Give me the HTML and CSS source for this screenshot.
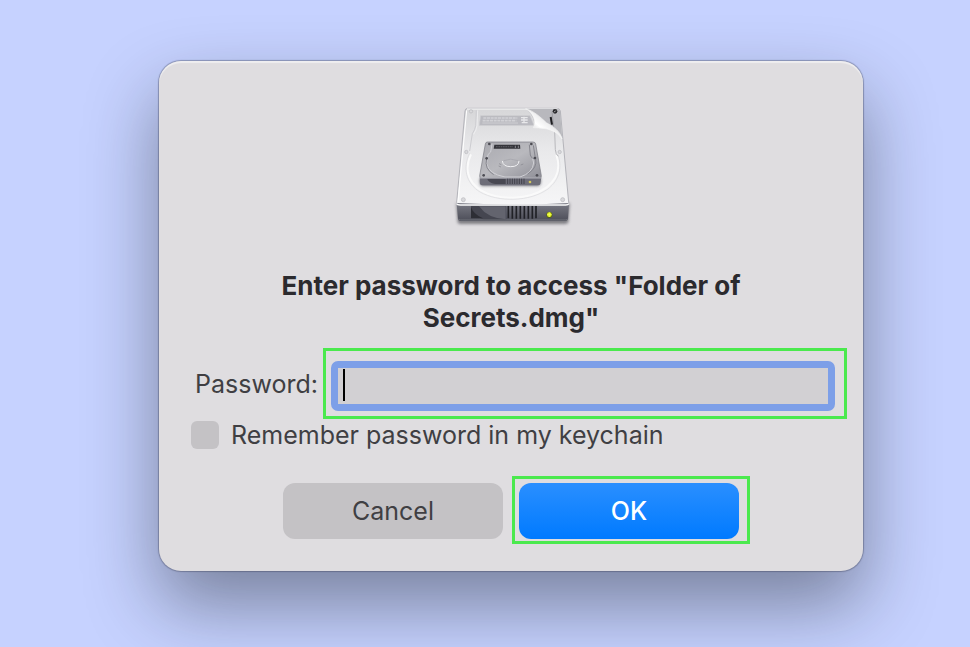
FILE: index.html
```html
<!DOCTYPE html>
<html lang="en">

<head>
    <meta charset="UTF-8">
    <meta name="viewport" content="width=device-width, initial-scale=1.0">
    <title>Enter password</title>
    <link rel="stylesheet" href="styles.css">
</head>

<body>
    <form class="dialog">
        <svg class="disk-icon" viewBox="-4 0 435 420" aria-hidden="true">
            <defs>
                <linearGradient id="top" x1="0" y1="0" x2="0" y2="1">
                    <stop offset="0" stop-color="#d6d6d8" />
                    <stop offset="0.4" stop-color="#e8e8ea" />
                    <stop offset="1" stop-color="#f6f6f7" />
                </linearGradient>
                <linearGradient id="front" x1="0" y1="0" x2="0" y2="1">
                    <stop offset="0" stop-color="#797a84" />
                    <stop offset="1" stop-color="#4c4d58" />
                </linearGradient>
                <linearGradient id="small" x1="0" y1="0" x2="1" y2="1">
                    <stop offset="0" stop-color="#a9a9af" />
                    <stop offset="0.5" stop-color="#b9b9be" />
                    <stop offset="1" stop-color="#8e8e96" />
                </linearGradient>
                <linearGradient id="curl" x1="0" y1="1" x2="1" y2="0">
                    <stop offset="0" stop-color="#a4a4a7" />
                    <stop offset="0.4" stop-color="#ffffff" />
                    <stop offset="1" stop-color="#c0c0c3" />
                </linearGradient>
                <filter id="soft" x="-10%" y="-50%" width="120%" height="200%">
                    <feGaussianBlur stdDeviation="5" />
                </filter>
            </defs>

            <!-- shadow -->
            <path d="M48 325H388L384 382Q382 387 374 387H60Q54 387 52 382Z" fill="#55555c" opacity="0.7" filter="url(#soft)" />

            <!-- big disk -->
            <path d="M82 40H350Q358 40 360 48L385 322Q386 331 378 331H58Q48 331 49 322L74 48Q75 40 82 40Z" fill="url(#top)" stroke="#b4b4ba" stroke-width="3" />
            <path d="M80 42H352" stroke="#fafafa" stroke-width="3" />
            <path d="M79 46L53 322" stroke="#fff" stroke-width="3" fill="none" />
            <path d="M108 46L106 92Q104 104 96 116L88 168" stroke="#cdcdd1" stroke-width="3" fill="none" />
            <path d="M112 46L110 92Q108 106 100 118" stroke="#f5f5f6" stroke-width="2" fill="none" />
            <path d="M92 178C72 218 80 260 122 286C176 318 266 316 318 278C354 250 360 214 348 180" fill="none" stroke="#fafafa" stroke-width="6" />
            <path d="M88 174C67 218 75 264 119 291C174 322 268 321 323 282C360 253 365 214 353 178" fill="none" stroke="#dadadd" stroke-width="2" />
            <path d="M343 110L345 164Q346 178 354 184" fill="none" stroke="#b8b8bc" stroke-width="3" />
            <g fill="#d9d9dc" stroke="#b8b8bd" stroke-width="2">
                <circle cx="92" cy="49" r="5" />
                <circle cx="78" cy="171" r="5" />
                <circle cx="358" cy="171" r="5" />
                <circle cx="69" cy="314" r="6" />
                <circle cx="367" cy="314" r="6" />
            </g>

            <!-- label -->
            <path d="M121 62H269L281 91H117Z" fill="#babac0" stroke="#cacacf" stroke-width="2" />
            <path d="M129 69H231M127 77H228" stroke="#d2d2d6" stroke-width="5" stroke-dasharray="9 2" />
            <path d="M126 84H233" stroke="#cfcfd3" stroke-width="3" />
            <path d="M242 68H262M242 75H262M251 65V84M244 83H262" stroke="#e8e8ea" stroke-width="4" />

            <!-- page curl -->
            <path d="M258 42H350Q357 42 359 50L366 132C362 112 340 98 280 97Q288 70 258 42Z" fill="#b8b8bd" />
            <path d="M335 50L340 95" stroke="#909095" stroke-width="2" />
            <path d="M331 66L335 89" stroke="#1d1d20" stroke-width="6" />
            <circle cx="344" cy="49" r="7" fill="#29292c" />
            <path d="M341 52L346 47" stroke="#b8b8ba" stroke-width="3" />
            <path d="M256 41C280 48 300 66 318 83C340 96 359 107 365 132C348 105 321 99 279 98C289 77 278 55 256 41Z" fill="url(#curl)" stroke="#f5f5f5" stroke-width="2" />

            <!-- front of the big disk -->
            <path d="M49 324Q218 333 386 324L383 372Q382 378 374 378H60Q54 378 53 372Z" fill="url(#front)" />
            <path d="M49 326Q50 330 60 330H376Q384 330 386 326" fill="none" stroke="#fbfbfb" stroke-width="4" />
            <path d="M92 333H198V375H130Q96 362 92 333Z" fill="#454650" />
            <path d="M92 333V370H128Q96 356 92 333Z" fill="#2d2e35" />
            <path d="M116 334Q142 370 196 373V334Z" fill="#63646e" />
            <path d="M204 333V370M216 333V371M228 333V371M240 333V371M252 333V371M264 333V371M276 333V371M287 333V370" stroke="#202126" stroke-width="5" />
            <path d="M54 371Q54 375 61 375H375Q381 375 382 371" fill="none" stroke="#84858d" stroke-width="2" />
            <circle cx="327" cy="360" r="9" fill="#566018" />
            <circle cx="327" cy="359" r="7" fill="#dff21c" />
            <path d="M327 352V366M320 359H334" stroke="#f8ff72" stroke-width="2" />

            <!-- small disk -->
            <path d="M118 251H302L300 266Q299 272 292 272H127Q120 272 119 266Z" fill="#6b6b73" filter="url(#soft)" />
            <path d="M141 141H278Q285 141 286 147L303 242Q304 251 296 251H126Q117 251 118 242L135 147Q136 141 141 141Z" fill="url(#small)" stroke="#77777f" stroke-width="2" />
            <path d="M155 146L151 171Q141 177 141 188L139 206Q145 237 194 246H239Q277 234 280 204L276 187" fill="none" stroke="#d0d0d5" stroke-width="3" />
            <path d="M139 191Q131 221 160 239M286 192Q292 218 262 237" fill="none" stroke="#85858d" stroke-width="3" />
            <path d="M162 149H239L240 161H160Z" fill="#34343a" />
            <path d="M167 155H218" stroke="#55555b" stroke-width="4" stroke-dasharray="5 2" />
            <path d="M225 152V159M234 152V159" stroke="#88888e" stroke-width="3" />
            <path d="M186 198Q188 215 211 215Q235 215 236 198" fill="none" stroke="#f0f0f2" stroke-width="3" />
            <path d="M190 197Q211 188 233 197" fill="none" stroke="#a2a2a9" stroke-width="2" />
            <path d="M176 206L183 209M241 210L249 207M175 213L182 216" stroke="#85858d" stroke-width="2" />
            <path d="M267 149L270 180Q271 190 284 192V183L279 151" fill="none" stroke="#85858d" stroke-width="3" />
            <g fill="#4c4c53">
                <circle cx="147" cy="147" r="4" />
                <circle cx="273" cy="147" r="4" />
                <circle cx="139" cy="190" r="4" />
                <circle cx="284" cy="189" r="4" />
                <circle cx="130" cy="241" r="4" />
                <circle cx="290" cy="241" r="4" />
            </g>
            <path d="M118 248H303L300 266Q299 271 293 271H127Q120 271 119 266Z" fill="#6d6d78" />
            <path d="M118 249H303" stroke="#d5d5da" stroke-width="2" />
            <path d="M141 252H196V267H164Q144 263 141 252Z" fill="#484852" />
            <path d="M202 251V267M209 251V267M216 251V267M223 251V267M230 251V267M237 251V267M244 251V267M251 251V267" stroke="#42424b" stroke-width="3" />
            <circle cx="269" cy="261" r="4" fill="#d2c65c" />
        </svg>

        <h1>Enter password to access "Folder of Secrets.dmg"</h1>

        <div class="password-row">
            <label for="password">Password:</label>
            <div class="highlight field-highlight">
                <input type="password" id="password">
                <span class="caret"></span>
            </div>
        </div>

        <div class="remember-row">
            <input type="checkbox" id="remember">
            <label for="remember">Remember password in my keychain</label>
        </div>

        <div class="buttons">
            <button type="button" class="cancel">Cancel</button>
            <div class="highlight ok-highlight">
                <button type="submit" class="ok">OK</button>
            </div>
        </div>
    </form>
</body>

</html>
```
FILE: styles.css
```css
* {
    box-sizing: border-box;
}

body {
    margin: 0;
    min-height: 100vh;
    padding: 61px 24px 76px 76px;
    display: flex;
    justify-content: center;
    align-items: flex-start;
    background-color: #c6d2ff;
    color: #403f43;
    font-family: Inter, "Liberation Sans", sans-serif;
    font-size: 25px;
    line-height: 32px;
}

.dialog {
    width: 100%;
    max-width: 704px;
    padding: 34px 32px 27px;
    border-radius: 22px;
    background-color: #dfdde0;
    box-shadow: inset 0 2px 1px rgba(255, 255, 255, 0.5), 0 0 1px 1px rgba(60, 65, 90, 0.4), 0 34px 72px rgba(15, 20, 25, 0.42);
}

.disk-icon {
    display: block;
    width: 145px;
    height: 140px;
    margin: 0 auto;
}

h1 {
    max-width: 500px;
    margin: 35px auto 14px;
    color: #2b2a2e;
    font-size: 26px;
    font-weight: 700;
    line-height: 32px;
    text-align: center;
}

.highlight {
    border: 3px solid #4be94e;
}

/* the field runs closer to the dialog edge than the rest */
.password-row {
    display: flex;
    align-items: center;
    gap: 5px;
    margin-right: -16px;
    padding-left: 4px;
}

.field-highlight {
    position: relative;
    flex: 1;
    padding: 10px 9px 5px 5px;
}

#password {
    display: block;
    width: 100%;
    height: 50px;
    padding: 0 6px;
    border: 7px solid #7d9fe8;
    border-radius: 7px;
    outline: none;
    background-color: #d2d0d3;
    font: inherit;
}

/* text cursor */
.caret {
    position: absolute;
    top: 18px;
    left: 17px;
    width: 2px;
    height: 32px;
    background-color: #000;
}

.remember-row {
    display: flex;
    align-items: center;
    gap: 12px;
}

#remember {
    appearance: none;
    width: 28px;
    height: 28px;
    margin: 0;
    border-radius: 6px;
    background-color: #c4c2c5;
}

.buttons {
    display: flex;
    justify-content: center;
    align-items: flex-end;
    gap: 9px;
    margin-top: 25px;
    padding-left: 11px;
}

button {
    display: block;
    width: 220px;
    height: 56px;
    padding: 0;
    border: none;
    border-radius: 12px;
    font: inherit;
}

.cancel {
    margin-bottom: 5px;
    background-color: #c4c2c5;
    color: #403f43;
}

.ok-highlight {
    padding: 4px 8px 2px 4px;
}

.ok {
    background-image: linear-gradient(#2a8fff, #007aff);
    color: #fff;
    font-weight: 500;
}
```
